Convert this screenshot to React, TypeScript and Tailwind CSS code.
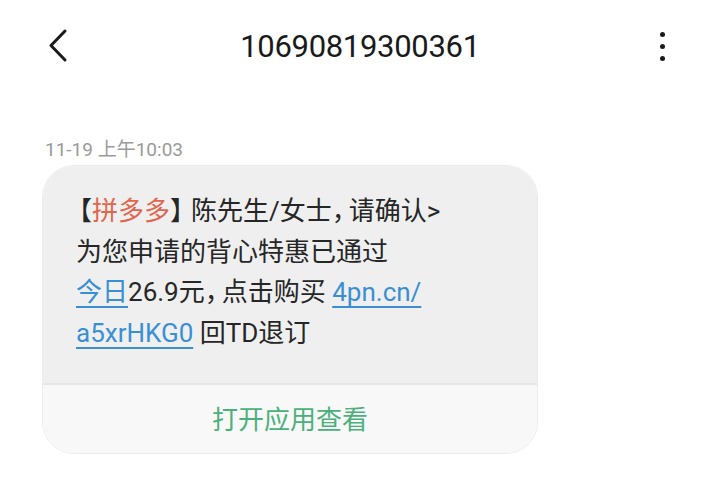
import React from "react";

export default function App() {
  const cjk = "font-['Roboto','Noto_Sans_CJK_SC',sans-serif]";
  const link = "text-[#3a8fd3] underline decoration-[1.5px] underline-offset-[5px]";
  return (
    <div className={`w-[720px] h-[503px] bg-white ${cjk} [font-feature-settings:'halt'] overflow-hidden`}>
      {/* header */}
      <div className="flex items-center h-[92px] px-[44px]">
        <svg width="28" height="40" viewBox="0 0 28 40" className="shrink-0">
          <path d="M21 5 L7 19.5 L21 34" fill="none" stroke="#1a1a1a" strokeWidth="3" strokeLinecap="round" strokeLinejoin="round" />
        </svg>
        <div className="flex-1 text-center text-[31px] text-[#1a1a1a] tracking-[-0.3px] leading-none">10690819300361</div>
        <div className="w-[28px] flex flex-col items-center gap-[7px] shrink-0">
          <span className="w-[5px] h-[5px] rounded-full bg-[#1a1a1a]" />
          <span className="w-[5px] h-[5px] rounded-full bg-[#1a1a1a]" />
          <span className="w-[5px] h-[5px] rounded-full bg-[#1a1a1a]" />
        </div>
      </div>

      {/* timestamp */}
      <div className="pl-[45px] mt-[48px] text-[19px] leading-[20px] text-[#9a9a9a]">11-19 上午10:03</div>

      {/* bubble */}
      <div className="ml-[42px] mt-[5px] w-[496px] rounded-[32px] overflow-hidden border border-[#ececec]">
        <div className="bg-[#efefef] pl-[33px] pr-[20px] pt-[25px] pb-[30px] text-[26px] leading-[40.5px] text-[#262626]">
          <div>
            <span className="ml-[3px]">【</span>
            <span className="text-[#e0664d]">拼多多</span>
            <span className="mr-[8px]">】</span>陈先生/女士<span className="mr-[4px]">，</span>请确认&gt;
          </div>
          <div>为您申请的背心特惠已通过</div>
          <div>
            <span className={link}>今日</span>26.9元<span className="mr-[4px]">，</span>点击购买{" "}
            <span className={link}>4pn.cn/</span>
          </div>
          <div>
            <span className={link}>a5xrHKG0</span> 回TD退订
          </div>
        </div>
        <div className="h-[2px] bg-[#e6e6e6]" />
        <div className="bg-[#f8f8f8] h-[68px] flex items-center justify-center text-[26px] text-[#4cb07c] pt-[2px]">
          打开应用查看
        </div>
      </div>
    </div>
  );
}
